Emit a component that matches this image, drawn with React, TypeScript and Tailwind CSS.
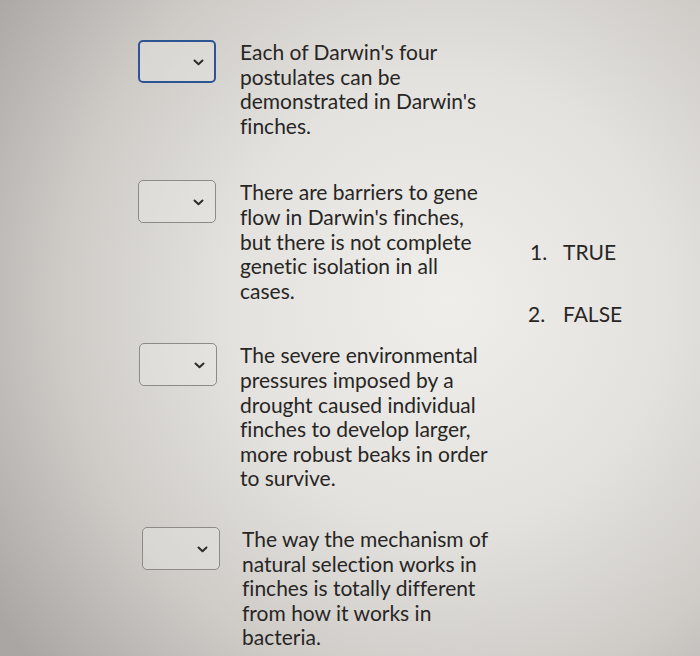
import React from "react";

type Item = { text: string; focused?: boolean; mt: string; boxMl: string; textMl: string };

const items: Item[] = [
  { text: "Each of Darwin's four postulates can be demonstrated in Darwin's finches.", focused: true, mt: "mt-[40px]", boxMl: "ml-[138px]", textMl: "ml-[24px]" },
  { text: "There are barriers to gene flow in Darwin's finches, but there is not complete genetic isolation in all cases.", mt: "mt-[42px]", boxMl: "ml-[138px]", textMl: "ml-[24px]" },
  { text: "The severe environmental pressures imposed by a drought caused individual finches to develop larger, more robust beaks in order to survive.", mt: "mt-[40px]", boxMl: "ml-[139px]", textMl: "ml-[23px]" },
  { text: "The way the mechanism of natural selection works in finches is totally different from how it works in bacteria.", mt: "mt-[36px]", boxMl: "ml-[142px]", textMl: "ml-[22px]" },
];

function Chevron() {
  return (
    <svg width="11" height="7" viewBox="0 0 11 7" className="block">
      <path d="M1.5 1.5 L5.5 5.2 L9.5 1.5" fill="none" stroke="#2b2b2b" strokeWidth="2" strokeLinecap="round" strokeLinejoin="round" />
    </svg>
  );
}

function Select({ focused }: { focused?: boolean }) {
  return (
    <div
      className={
        focused
          ? "w-[78px] h-[43px] rounded-[5px] border-2 border-[#2f5493] bg-[#e9e8e4]/40 flex items-center justify-end pr-[10px] pt-[2px]"
          : "w-[78px] h-[43px] rounded-[5px] border border-[#8d8b88] bg-[#e9e8e4]/40 flex items-center justify-end pr-[11px] pt-[2px]"
      }
    >
      <Chevron />
    </div>
  );
}

export default function App() {
  return (
    <div
      className="w-[700px] h-[656px] overflow-hidden text-[#272625] [font-variant-ligatures:none] bg-[radial-gradient(ellipse_78%_85%_at_64%_46%,#efeeea_0%,#e4e2de_40%,#cfccc8_70%,#aaa6a3_100%)]"
      style={{ fontFamily: "Lato, 'Open Sans', sans-serif" }}
    >
      <div className="flex">
        <div className="flex flex-col">
          {items.map((it, i) => (
            <div key={i} className={`flex ${it.mt}`}>
              <div className={it.boxMl}>
                <Select focused={it.focused} />
              </div>
              <p className={`w-[252px] text-[21px] leading-[24.6px] ${it.textMl}`}>{it.text}</p>
            </div>
          ))}
        </div>
        <div className="ml-[36px] mt-[239px] flex flex-col gap-[37px] text-[21px] leading-[25px]">
          <div className="flex">
            <span className="w-[33px]">1.</span>
            <span>TRUE</span>
          </div>
          <div className="flex -ml-[2px]">
            <span className="w-[35px]">2.</span>
            <span>FALSE</span>
          </div>
        </div>
      </div>
    </div>
  );
}
